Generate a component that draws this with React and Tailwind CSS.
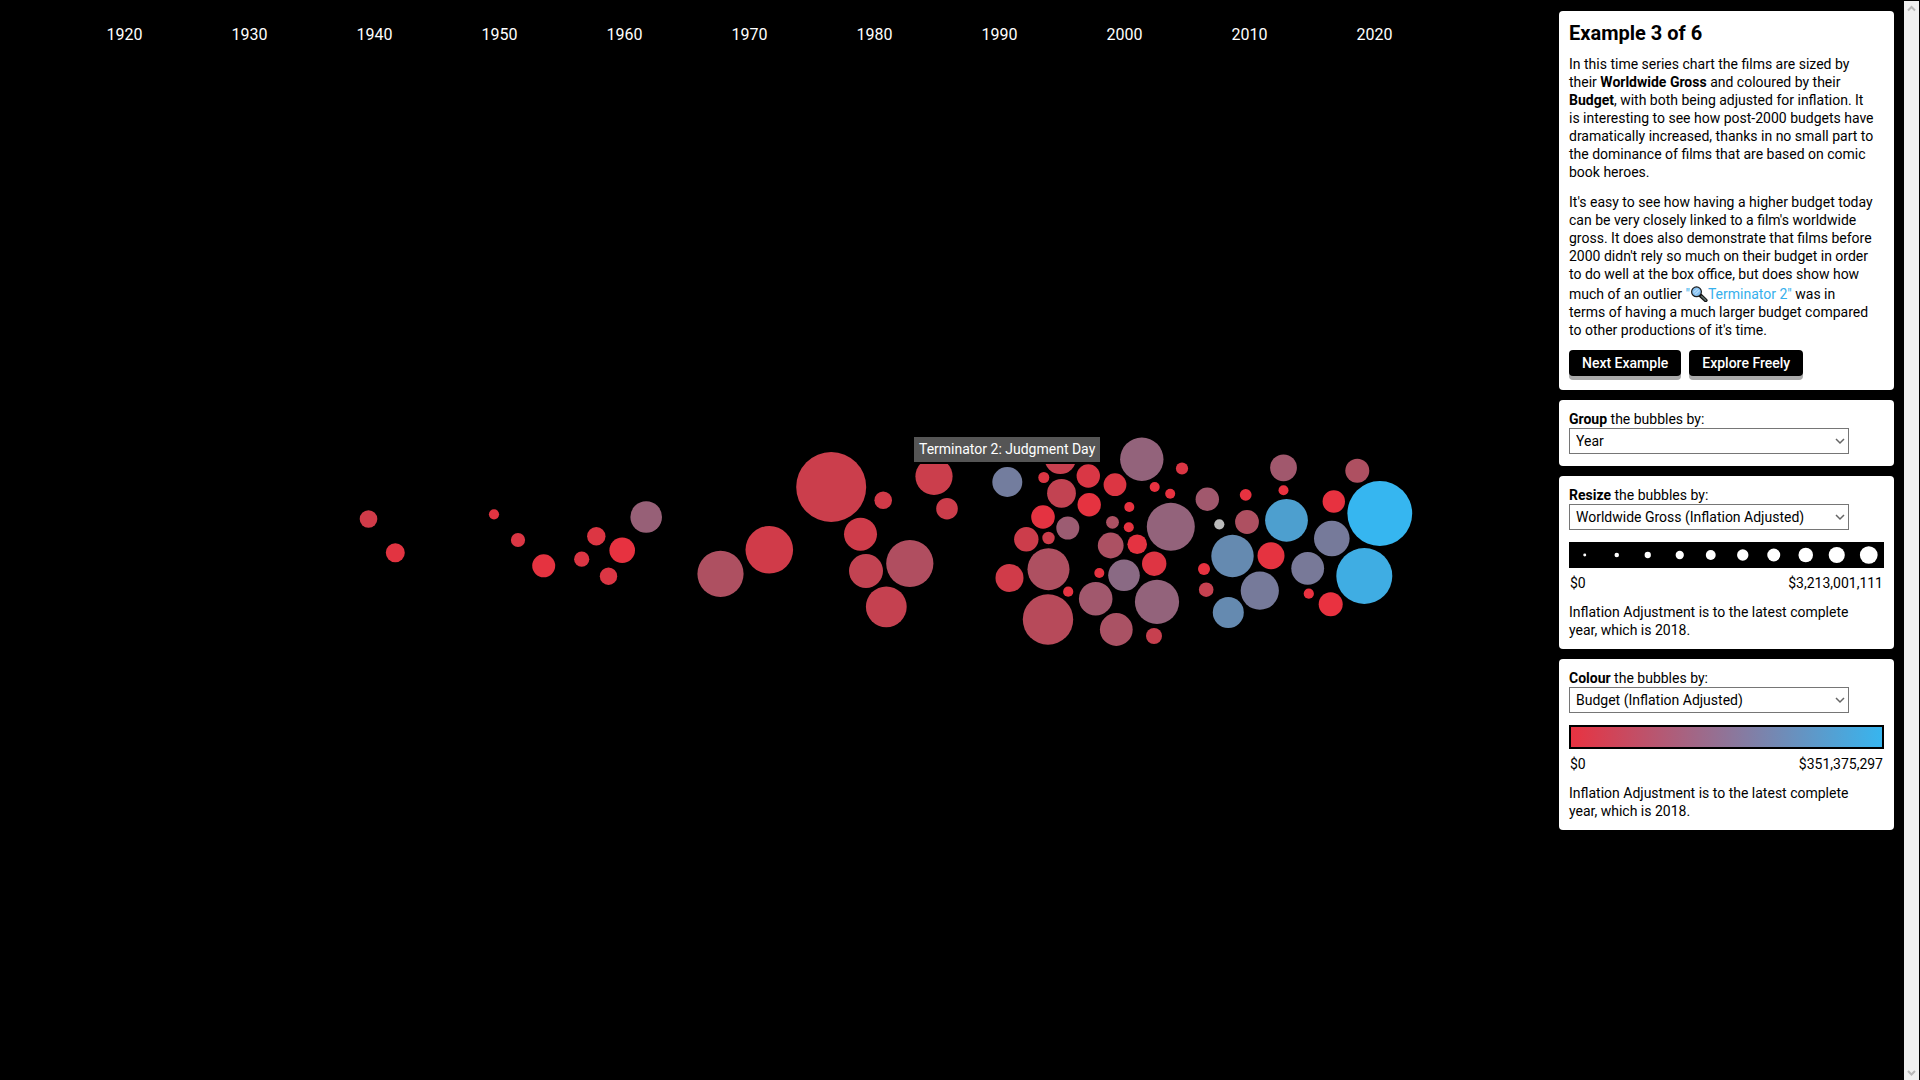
import React, { useState } from 'react';

const YEARS = [1920, 1930, 1940, 1950, 1960, 1970, 1980, 1990, 2000, 2010, 2020];

// x, y, radius, budget as a share of the largest (null = unknown)
const FILMS = [
  [368.5, 519, 8.8, 0.14],
  [395.3, 552.7, 9.5, 0.04],
  [494, 514.3, 5.1, 0.04],
  [518, 540, 7.1, 0.08],
  [543.7, 565.8, 11.5, 0.02],
  [581.7, 559.2, 7.6, 0.08],
  [596.3, 536.3, 9.2, 0.07],
  [608.5, 576.2, 8.7, 0.08],
  [622.2, 550.2, 12.8, 0.01],
  [646.2, 517, 15.8, 0.46],
  [720.5, 573.8, 23.1, 0.33],
  [769.3, 549.8, 23.8, 0.14],
  [831.2, 487, 35, 0.17],
  [883.2, 500.3, 8.8, 0.13],
  [860.5, 534.2, 16.5, 0.15],
  [866, 571, 17, 0.22],
  [886.3, 606.8, 20.4, 0.2],
  [909.8, 563.5, 23.6, 0.32],
  [934, 476.3, 18.6, 0.17],
  [947, 508.7, 10.8, 0.16],
  [1007.3, 482, 15, 0.66],
  [1009.5, 578, 14, 0.14],
  [1026.3, 539.3, 12.2, 0.16],
  [1048.5, 538, 6.2, 0.16],
  [1043, 517, 11.8, 0.03],
  [1061.5, 493.3, 14.4, 0.22],
  [1060.3, 458.3, 15.8, 0.19],
  [1043.8, 477.5, 5.5, 0.07],
  [1088.3, 476, 11.7, 0.09],
  [1089.2, 504.7, 11.7, 0.02],
  [1115, 484.7, 11.4, 0.07],
  [1067.8, 528, 11.5, 0.43],
  [1048.5, 569.2, 21, 0.33],
  [1048, 619.5, 25.2, 0.28],
  [1068.2, 591.7, 5.1, 0.03],
  [1099.3, 573, 5, 0.02],
  [1112.5, 522.3, 6.4, 0.34],
  [1110.7, 545.5, 12.9, 0.34],
  [1129.3, 507, 5, 0.01],
  [1128.8, 527.3, 5, 0.02],
  [1137.2, 544.2, 9.8, 0.03],
  [1124, 575.3, 15.8, 0.53],
  [1095.7, 598.7, 16.8, 0.4],
  [1116.3, 629.5, 16.4, 0.35],
  [1141.8, 459.2, 21.7, 0.48],
  [1182, 468.5, 6.1, 0.08],
  [1154.7, 487, 5, 0],
  [1170.2, 493.8, 5, 0.01],
  [1170.8, 526.8, 24, 0.48],
  [1154.2, 563.7, 12.2, 0.06],
  [1157, 601.8, 22.1, 0.48],
  [1154, 636, 8, 0.19],
  [1207.3, 499.3, 11.7, 0.4],
  [1219.3, 524.3, 5.1, null],
  [1245.7, 494.8, 5.9, 0.01],
  [1247, 522, 11.9, 0.33],
  [1283.5, 467.8, 13.4, 0.4],
  [1283.5, 490.2, 5, 0],
  [1286.5, 520.3, 21.4, 0.87],
  [1232.5, 556, 21.2, 0.74],
  [1204, 569, 6, 0.01],
  [1206.2, 589.7, 7.3, 0.2],
  [1271, 555.8, 13.5, 0.02],
  [1259.8, 590.7, 19.1, 0.64],
  [1228.3, 612.5, 15.5, 0.74],
  [1307.7, 568.3, 16.4, 0.63],
  [1308.8, 593.7, 5.1, 0],
  [1330.7, 604.2, 12, 0],
  [1331.8, 538.5, 17.8, 0.64],
  [1333.8, 501.5, 11.2, 0.01],
  [1357.3, 470.8, 12, 0.33],
  [1379.8, 513.5, 32.4, 1],
  [1364.3, 576, 28, 0.95],
];

const LOW = [233, 50, 64];
const HIGH = [54, 182, 240];
// green and blue rise later than red falls, which keeps the middle of the scale muted
const CURVE = [1, 1.35, 1.5];

const budgetColour = (share) => {
  if (share === null) return '#bbbbbb';
  const [r, g, b] = LOW.map((c, i) => Math.round(c + (HIGH[i] - c) * share ** CURVE[i]));
  return `rgb(${r}, ${g}, ${b})`;
};

const SIZE_KEY = [1.5, 2.3, 3.2, 4.2, 5, 5.8, 6.6, 7.4, 8.2, 9];

const Card = ({ children }) => (
  <section className="rounded bg-white p-[10px]">{children}</section>
);

const Picker = ({ id, action, options }) => {
  const [value, setValue] = useState(options[0]);
  return (
    <div className="pb-[2px]">
      <label htmlFor={id} className="block">
        <b>{action}</b> the bubbles by:
      </label>
      <div className="relative w-[280px]">
        <select
          id={id}
          value={value}
          onChange={(e) => setValue(e.target.value)}
          className="block h-[26px] w-full appearance-none border border-[#767676] bg-white pl-[6px] pr-6"
        >
          {options.map((option) => (
            <option key={option}>{option}</option>
          ))}
        </select>
        <svg className="pointer-events-none absolute right-1 top-[9px] h-2 w-[10px]" viewBox="0 0 10 8" fill="none" stroke="#666" strokeWidth="1.5">
          <path d="M1 2l4 4 4-4" />
        </svg>
      </div>
    </div>
  );
};

const KeyRange = ({ from, to }) => (
  <div className="flex justify-between px-px pt-[6px]">
    <span>{from}</span>
    <span>{to}</span>
  </div>
);

const InflationNote = () => (
  <p className="mt-[11px]">
    Inflation Adjustment is to the latest complete
    <br />
    year, which is 2018.
  </p>
);

const ActionButton = ({ children }) => (
  <button type="button" className="h-[26px] rounded bg-black px-[13px] font-medium text-white shadow-[0_4px_0_#aaa]">
    {children}
  </button>
);

const Magnifier = () => (
  <svg className="inline-block h-[19px] w-[18px] align-[-3px]" viewBox="0 -3 18 19">
    <path d="M10.5 9.5l5.2 4.8" stroke="#111" strokeWidth="3.8" strokeLinecap="round" />
    <path d="M11.6 10.4l4 3.7" stroke="#5b6b68" strokeWidth="1.8" strokeLinecap="round" />
    <circle cx="6.5" cy="5.8" r="4.9" fill="#84bff0" stroke="#1c1c1c" strokeWidth="1.2" />
    <path d="M3.6 6.6l4-3.8M5 8.4l4.4-4.2" stroke="#b5dcfa" strokeWidth="1.2" />
  </svg>
);

const Chart = () => (
  <main className="relative min-w-0 flex-1">
    <div className="grid grid-cols-11 pl-[62px] pr-[112px] pt-[25px] text-center text-base leading-5 text-white">
      {YEARS.map((year) => (
        <span key={year}>{year}</span>
      ))}
    </div>
    <svg className="mt-[385px] w-full" viewBox="0 430 1549 220" role="img" aria-label="Films by year">
      {FILMS.map(([x, y, r, share]) => (
        <circle key={`${x}-${y}`} cx={x} cy={y} r={r} fill={budgetColour(share)} />
      ))}
    </svg>
    <div className="absolute left-[912px] top-[435px] border-2 border-black bg-[#555] px-[5px] py-[3px] leading-[19px] text-white">
      Terminator 2: Judgment Day
    </div>
  </main>
);

const ScrollBar = () => (
  <div className="mr-px mt-px flex w-[15px] flex-col justify-between bg-[#f0f0f0]">
    <svg className="h-[15px] w-[15px]" viewBox="0 0 15 15" fill="none" stroke="#b8b8b8" strokeWidth="2">
      <path d="M4 9.5l3.5-3.5 3.5 3.5" />
    </svg>
    <svg className="h-[15px] w-[15px]" viewBox="0 0 15 15" fill="none" stroke="#b8b8b8" strokeWidth="2">
      <path d="M4 6l3.5 3.5 3.5-3.5" />
    </svg>
  </div>
);

export default function App() {
  return (
    <div className="flex min-h-screen bg-black font-[Roboto,sans-serif] text-[14px] leading-[18px] text-black">
      <Chart />
      <aside className="mx-[10px] mt-[11px] flex w-[335px] flex-col gap-[10px]">
        <Card>
          <h1 className="text-xl font-bold leading-6">Example 3 of 6</h1>
          <p className="mt-[10px]">
            In this time series chart the films are sized by
            <br />
            their <b>Worldwide Gross</b> and coloured by their
            <br />
            <b>Budget</b>, with both being adjusted for inflation. It
            <br />
            is interesting to see how post-2000 budgets have
            <br />
            dramatically increased, thanks in no small part to
            <br />
            the dominance of films that are based on comic
            <br />
            book heroes.
          </p>
          <p className="mt-3">
            It's easy to see how having a higher budget today
            <br />
            can be very closely linked to a film's worldwide
            <br />
            gross. It does also demonstrate that films before
            <br />
            2000 didn't rely so much on their budget in order
            <br />
            to do well at the box office, but does show how
            <br />
            much of an outlier{' '}
            <a href="#terminator-2" className="text-[#36b0ec]">
              "<Magnifier />Terminator 2"
            </a>{' '}
            was in
            <br />
            terms of having a much larger budget compared
            <br />
            to other productions of it's time.
          </p>
          <div className="mb-1 mt-[11px] flex gap-2">
            <ActionButton>Next Example</ActionButton>
            <ActionButton>Explore Freely</ActionButton>
          </div>
        </Card>

        <Card>
          <Picker id="group" action="Group" options={['Year']} />
        </Card>

        <Card>
          <Picker id="resize" action="Resize" options={['Worldwide Gross (Inflation Adjusted)']} />
          <div className="mt-[10px] grid h-[26px] grid-cols-10 bg-black">
            {SIZE_KEY.map((r) => (
              <svg key={r} className="h-[26px] w-full" viewBox="0 0 32 26">
                <circle cx="16" cy="13" r={r} fill="#fff" />
              </svg>
            ))}
          </div>
          <KeyRange from="$0" to="$3,213,001,111" />
          <InflationNote />
        </Card>

        <Card>
          <Picker id="colour" action="Colour" options={['Budget (Inflation Adjusted)']} />
          <div className="mt-[10px] h-6 border-2 border-black bg-linear-to-r/srgb from-[#e93240] to-[#36b6f0] bg-origin-border" />
          <KeyRange from="$0" to="$351,375,297" />
          <InflationNote />
        </Card>
      </aside>
      <ScrollBar />
    </div>
  );
}
